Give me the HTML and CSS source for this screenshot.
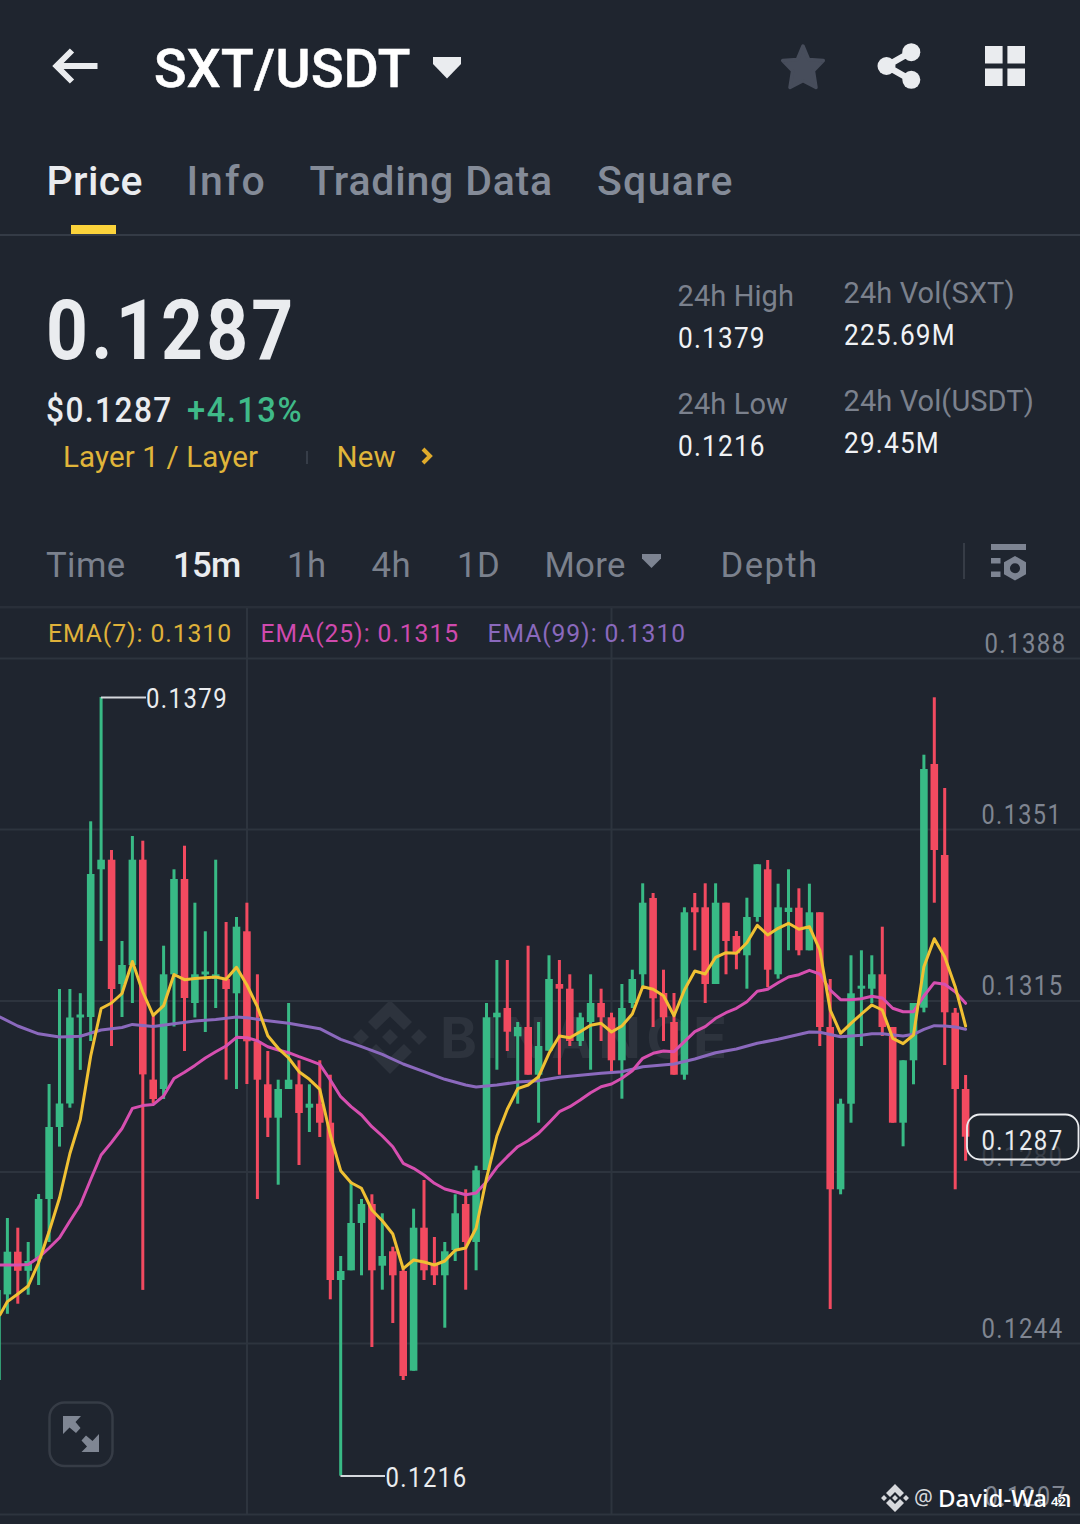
FILE: index.html
```html
<!DOCTYPE html>
<html>
    <head>
        <meta charset="utf-8">
        <title>SXT/USDT</title>
        <link rel="stylesheet" href="styles.css">
    </head>
    <body>

<!----- HEADER ----->
        <div class="header">
            <svg class="back" width="46" height="36" viewBox="0 0 46 36">
                <path d="M20 2.5L4.5 18L20 33.5M4 18H45.5" fill="none" stroke="#eaecef" stroke-width="6"/>
            </svg>
            <div class="pair">SXT/USDT</div>
            <svg class="caret" width="28" height="22" viewBox="0 0 28 22">
                <path d="M0 0H28V7L14 21.5L0 7Z" fill="#eaecef"/>
            </svg>
            <svg class="star" width="46" height="48" viewBox="0 0 46 48">
                <path d="M23 3L28.6 16.4L43.3 17.6L33.4 27.8L36 44.5L23 37.8L10 44.5L12.6 27.8L2.7 17.6L17.4 16.4Z" fill="#474d5b" stroke="#474d5b" stroke-width="3.5" stroke-linejoin="round"/>
            </svg>
            <svg class="share" width="44" height="46" viewBox="0 0 44 46">
                <path d="M34 9L9.5 23L34 37" fill="none" stroke="#eaecef" stroke-width="6.5"/>
                <circle cx="9.5" cy="23" r="9"/>
                <circle cx="34.3" cy="9.2" r="9"/>
                <circle cx="34.3" cy="36.8" r="9"/>
            </svg>
            <svg class="menu" width="40" height="40" viewBox="0 0 40 40">
                <path d="M0 0H17.6V17.6H0ZM22.4 0H40V17.6H22.4ZM0 22.4H17.6V40H0ZM22.4 22.4H40V40H22.4Z" fill="#eaecef"/>
            </svg>
        </div>

<!----- TABS ----->
        <div class="tabs">
            <div class="active">Price</div>
            <div class="info">Info</div>
            <div>Trading Data</div>
            <div class="square">Square</div>
        </div>

<!----- QUOTE ----->
        <div class="quote">
            <div class="last">
                <div class="price"><span>0.1287</span></div>
                <div class="change">
                    <div class="usd"><span>$0.1287</span></div>
                    <div class="pct"><span>+4.13%</span></div>
                </div>
                <div class="tags">
                    <div class="tag">Layer 1 / Layer</div>
                    <div class="sep"></div>
                    <div>New</div>
                    <svg width="12" height="18" viewBox="0 0 12 18">
                        <path d="M2 2L9 9L2 16" fill="none" stroke="#e0ab2b" stroke-width="4"/>
                    </svg>
                </div>
            </div>
            <div class="stats">
                <div class="label">24h High</div>
                <div class="value"><span>0.1379</span></div>
                <div class="label low">24h Low</div>
                <div class="value"><span>0.1216</span></div>
            </div>
            <div class="stats vol">
                <div class="label">24h Vol(SXT)</div>
                <div class="value"><span>225.69M</span></div>
                <div class="label low">24h Vol(USDT)</div>
                <div class="value"><span>29.45M</span></div>
            </div>
        </div>

<!----- INTERVALS ----->
        <div class="intervals">
            <div>Time</div>
            <div class="active">15m</div>
            <div>1h</div>
            <div>4h</div>
            <div>1D</div>
            <div class="more">More
                <svg width="19" height="14" viewBox="0 0 19 14"><path d="M0 0H19V4.5L9.5 14L0 4.5Z" fill="#7d8492"/></svg>
            </div>
            <div class="depth">Depth</div>
            <div class="bar"></div>
            <svg width="36" height="37" viewBox="0 0 36 37">
                <path d="M0 0H35V6H0ZM0 14H9.5V19.5H0ZM0 27.5H9.5V33H0Z" fill="#7d8492"/>
                <path d="M24 12L35 18.2V30.3L24 36.5L13 30.3V18.2ZM24 19.2A5 5 0 1 0 24 29.3A5 5 0 1 0 24 19.2Z" fill="#7d8492" fill-rule="evenodd"/>
            </svg>
        </div>

<!----- CHART ----->
        <svg id="chart" width="1080" height="918" viewBox="0 606 1080 918">
            <path class="grid top" d="M0 607H1080"/>
            <path class="grid" d="M0 658.5H1080M0 829.5H1080M0 1001H1080M0 1172H1080M0 1343.5H1080M0 1514.5H1080M247 608V1514M611.5 608V1514"/>

            <g class="mark">
                <path d="M390 1000L412 1022L404 1030L390 1016.5L376 1030L368 1022ZM390 1074L412 1052L404 1044L390 1057.5L376 1044L368 1052ZM390 1029L398 1037L390 1045L382 1037ZM361 1029L369 1037L361 1045L353 1037ZM419 1029L427 1037L419 1045L411 1037Z"/>
                <text x="440" y="1058" textLength="287">BINANCE</text>
            </g>

            <g class="axis">
                <text x="984.5" y="653" textLength="82" lengthAdjust="spacingAndGlyphs">0.1388</text>
                <text x="981.5" y="824" textLength="80.500" lengthAdjust="spacingAndGlyphs">0.1351</text>
                <text x="981.5" y="995" textLength="82" lengthAdjust="spacingAndGlyphs">0.1315</text>
                <text x="981.5" y="1166" textLength="82" lengthAdjust="spacingAndGlyphs">0.1280</text>
                <text x="981.5" y="1338" textLength="82" lengthAdjust="spacingAndGlyphs">0.1244</text>
                <text x="984.5" y="1506" textLength="82" lengthAdjust="spacingAndGlyphs">0.1207</text>
            </g>

            <rect class="tagFill" x="967" y="1114.5" width="111.5" height="45" rx="13"/>
            <g id="candles"></g>
            <g id="lines"></g>
            <rect class="tagLine" x="967" y="1114.5" width="111.5" height="45" rx="13"/>

            <g class="ema">
                <text class="yellow" x="48" y="642" textLength="184" lengthAdjust="spacingAndGlyphs">EMA(7): 0.1310</text>
                <text class="pink" x="260.5" y="642" textLength="198.500" lengthAdjust="spacingAndGlyphs">EMA(25): 0.1315</text>
                <text class="purple" x="487.5" y="642" textLength="198.500" lengthAdjust="spacingAndGlyphs">EMA(99): 0.1310</text>
            </g>

            <g class="peak">
                <path d="M101 697.5H146M340.5 1476H385"/>
                <text x="146" y="708" textLength="82" lengthAdjust="spacingAndGlyphs">0.1379</text>
                <text x="385.5" y="1487" textLength="82" lengthAdjust="spacingAndGlyphs">0.1216</text>
                <text x="981.5" y="1150" textLength="82" lengthAdjust="spacingAndGlyphs">0.1287</text>
            </g>

            <g class="expand">
                <rect x="49.5" y="1402.5" width="63" height="63.5" rx="15"/>
                <path d="M63 1416H81L75.5 1422L80.5 1428L76 1433L69.5 1427.5L63 1434ZM99 1452H81.5L87 1446.5L81.5 1440.5L86 1435.5L92.5 1441L99 1434Z"/>
            </g>

            <g class="user">
                <path d="M895 1484L904 1493L900 1497L895 1492L890 1497L886 1493ZM895 1512L904 1503L900 1499L895 1504L890 1499L886 1503ZM895 1495L898 1498L895 1501L892 1498ZM884 1495L887 1498L884 1501L881 1498ZM906 1495L909 1498L906 1501L903 1498Z"/>
                <text class="at" x="914" y="1505" textLength="20">@</text>
                <text x="938" y="1507" textLength="109">David-Wa</text>
                <text x="1056.5" y="1507">n</text>
                <text class="small" x="1051" y="1506">42</text>
            </g>
        </svg>

        <script src="chart.js"></script>
    </body>
</html>
```
FILE: styles.css
```css
body{
    margin: 0;
    width: 1080px;
    height: 1524px;
    overflow: hidden;
    background-color: #1f252f;
    color: #eaecef;
    font-family: Roboto, "Noto Sans", sans-serif;
}
svg{
    display: block;
    flex: none;
}

/*----- HEADER -----*/
.header{
    display: flex;
    align-items: center;
    height: 132px;
    padding: 0 55px 0 52px;
}
.pair{
    margin-left: 56px;
    padding-top: 6px;
    width: 256px;
    font-size: 53.5px;
    line-height: 64px;
    font-weight: 500;
    letter-spacing: 0.45px;
    -webkit-text-stroke: 0.6px #fff;
    color: #fff;
}
.caret{
    margin-left: 23px;
    margin-top: 3px;
}
.star{
    margin-left: auto;
    margin-top: 2px;
}
.share{
    margin-left: 51px;
    fill: #eaecef;
}
.menu{
    margin-left: 64px;
}

/*----- TABS -----*/
.tabs{
    display: grid;
    grid-template-columns: 139px 124px 287px auto;
    box-sizing: border-box;
    height: 104px;
    padding-left: 46.5px;
    border-bottom: 2px solid #343b46;
    font-size: 41px;
    line-height: 98px;
    font-weight: 500;
    letter-spacing: 0.8px;
    color: #848b98;
}
.tabs .active{
    position: relative;
    letter-spacing: 0.4px;
    color: #eaecef;
}
.tabs .active::after{
    content: "";
    position: absolute;
    left: 24.5px;
    top: 93px;
    width: 45px;
    height: 9px;
    background-color: #fbd33b;
}
.tabs .info{
    padding-left: 1px;
    letter-spacing: 2px;
}
.tabs .square{
    padding-left: 0.5px;
    letter-spacing: 1.3px;
}

/*----- QUOTE -----*/
.quote{
    display: flex;
    height: 288px;
}
.last{
    box-sizing: border-box;
    width: 677.5px;
    padding: 54.5px 0 0 46px;
}
/* narrow, spaced digits */
.price span, .usd span, .pct span, .value span{
    display: inline-block;
    letter-spacing: 0.045em;
    transform: scaleX(0.89);
    transform-origin: left;
}
.price{
    font-size: 84px;
    line-height: 80px;
    font-weight: 700;
}
.price span{
    transform: scaleX(0.87);
}
.change{
    display: grid;
    grid-template-columns: 141px auto;
    margin-top: 15.5px;
    font-size: 35.6px;
    line-height: 48px;
    font-weight: 500;
}
.pct{
    color: #3fba88;
}
.pct span{
    transform: scaleX(0.92);
}
.tags{
    display: flex;
    align-items: center;
    font-size: 29.5px;
    line-height: 46px;
    letter-spacing: 0.15px;
    color: #e0b53a;
}
.tag{
    margin-left: 17px;
    width: 243px;
}
.sep{
    width: 2px;
    height: 13px;
    margin-right: 28.5px;
    background-color: #363d48;
}
.tags svg{
    margin-left: 25px;
    margin-top: -2px;
}
.stats{
    width: 166px;
    padding-top: 39px;
    line-height: 42px;
    white-space: nowrap;
}
.vol{
    width: 230px;
    padding-top: 36px;
}
.label{
    font-size: 29px;
    letter-spacing: 0.1px;
    color: #7b818d;
}
.value{
    font-size: 29.5px;
    color: #f0f2f5;
}
.low{
    margin-top: 24px;
}

/*----- INTERVALS -----*/
.intervals{
    display: grid;
    grid-template-columns: 126px 115px 84.5px 85.5px 87.5px 176px 242px 28px 36px;
    align-items: center;
    height: 82px;
    padding-left: 46px;
    font-size: 34.7px;
    line-height: 82px;
    letter-spacing: 0.4px;
    color: #7b818d;
}
.intervals .active{
    padding-left: 1px;
    letter-spacing: -0.7px;
    font-weight: 500;
    color: #eaecef;
}
.more{
    display: flex;
    align-items: center;
    gap: 16px;
    letter-spacing: 0.3px;
}
.more svg{
    margin-top: -8px;
}
.depth{
    letter-spacing: 1.4px;
}
.bar{
    width: 2px;
    height: 36px;
    margin-top: -8px;
    background-color: #363c46;
}
.intervals > svg{
    margin-top: -5px;
}

/*----- CHART -----*/
#chart text{
    font-size: 27px;
    letter-spacing: 1.6px;
}
#chart .ema text{
    font-size: 26.5px;
    letter-spacing: 1px;
}
.grid{
    fill: none;
    stroke: #2d343e;
    stroke-width: 2;
}
.top{
    stroke: #292f39;
    stroke-width: 3;
}
.mark{
    fill: #2d333d;
}
#chart .mark text{
    font-family: Inter, sans-serif;
    font-size: 56px;
    font-weight: 700;
    letter-spacing: 0;
}
.axis{
    fill: #7f8591;
}
.tagFill{
    fill: #1f252f;
    fill-opacity: 0.75;
}
.tagLine{
    fill: none;
    stroke: #eaecef;
    stroke-width: 1.8;
}
.up{
    fill: #38ba85;
}
.down{
    fill: #f24a60;
}
#lines path{
    fill: none;
    stroke-width: 3;
    stroke-linejoin: round;
    stroke-linecap: round;
}
.yellow{
    fill: #dfb13a;
}
.pink{
    fill: #cf4aae;
}
.purple{
    fill: #8a69bd;
}
.peak{
    fill: #eaecef;
}
.peak path{
    stroke: #d5d8dd;
    stroke-width: 2;
}
.expand rect{
    fill: #1f252f;
    stroke: #363c46;
    stroke-width: 2.5;
}
.expand path{
    fill: #7f8693;
}
.user{
    fill: #fff;
}
#chart .user text{
    font-family: "Noto Sans", sans-serif;
    font-size: 24px;
    font-weight: 500;
    letter-spacing: 0;
}
.user path, .user .at{
    fill: #d6d8dc;
}
#chart .user .at{
    font-size: 21px;
    font-weight: 400;
}
#chart .user .small{
    font-size: 13px;
    font-weight: 600;
    stroke: #1f252f;
    stroke-width: 1.5;
    paint-order: stroke;
}
```
FILE: chart.js
```js
// first candle sits half off the left edge
var startX = 7.4;
var step = 10.415;

// [up, high, body top, body bottom, low]
var candles = [
    [1, 1290, 1290, 1380, 1380],
    [1, 1218, 1251.7, 1294.4, 1313.8], [0, 1227.7, 1251.7, 1270.8, 1303.7], [1, 1242, 1261, 1270.8, 1294.7],
    [1, 1194, 1199, 1258.6, 1285], [1, 1084, 1127, 1199, 1242], [1, 989, 1103.5, 1127, 1146.6],
    [1, 989, 1017.5, 1103.5, 1107.7], [1, 993.2, 1014.5, 1017.5, 1069.9], [1, 821.3, 874, 1017, 1041],
    [1, 697, 859.7, 869.3, 941], [0, 850, 859.7, 989, 1046], [1, 941, 965, 984, 1017],
    [1, 836, 859.7, 965, 1003], [0, 840.7, 859.7, 1074.4, 1289.9], [0, 1015, 1079.6, 1099, 1103],
    [1, 945.7, 974.3, 1089, 1099], [1, 869.3, 879, 974.3, 1026.5], [0, 845.7, 879, 998, 1051],
    [1, 902.7, 974.3, 1003, 1017.5], [1, 931.3, 971.5, 974.5, 1032], [1, 859.7, 974.3, 979, 1008],
    [0, 922, 979, 989, 1079.6], [1, 917, 926.7, 993.3, 1089], [0, 902.7, 931.3, 1041.3, 1084],
    [0, 974.3, 1041.3, 1079.7, 1199], [0, 1051, 1084.3, 1117.7, 1137], [1, 1079.7, 1089, 1117.7, 1184.7],
    [1, 1003, 1079.7, 1089, 1089], [0, 1060.3, 1084.3, 1113, 1165], [1, 1084.3, 1103.7, 1107.7, 1132],
    [0, 1060.3, 1103.7, 1122.7, 1137], [0, 1074.7, 1122.7, 1280, 1299.3], [1, 1256, 1271, 1280, 1475.7],
    [1, 1181.7, 1223, 1270.3, 1270.3], [1, 1199, 1204, 1223, 1275.3], [0, 1194.3, 1204, 1270.3, 1347],
    [1, 1213.3, 1256, 1265.7, 1289.7], [0, 1246.7, 1251.3, 1275.3, 1323], [0, 1266, 1271, 1376, 1380],
    [1, 1208.7, 1227.7, 1370.7, 1370.7], [0, 1180, 1227.7, 1270.3, 1280], [0, 1237, 1263, 1275.3, 1285],
    [1, 1242, 1251.3, 1275.3, 1327.7], [1, 1194.3, 1213.3, 1250, 1261], [0, 1189.3, 1204, 1242, 1289.7],
    [1, 1165.7, 1170.3, 1242, 1270.3], [1, 1003, 1017.3, 1170, 1170], [1, 960, 1012.7, 1017.3, 1069.7],
    [0, 960, 1008, 1031.7, 1051], [1, 1022, 1027, 1036.3, 1103.7], [0, 945.7, 1027, 1074.7, 1074.7],
    [1, 1022, 1046, 1074.7, 1122.7], [1, 955.3, 979, 1050.7, 1050.7], [0, 960, 984, 988.7, 1074.7],
    [0, 974.3, 988.7, 1041, 1046], [1, 1012.7, 1017.3, 1041, 1046], [1, 974.3, 1003, 1022, 1069.7],
    [0, 988.7, 1003, 1017.3, 1041], [0, 1012.7, 1017.3, 1060.3, 1072], [1, 984, 1008, 1060.3, 1098.7],
    [1, 969.7, 979, 1003, 1008], [1, 883.3, 902.7, 974.3, 988], [0, 893, 898, 998.3, 1027],
    [0, 969.7, 993, 1017.3, 1041], [0, 993, 1022, 1074.7, 1074.7], [1, 907.3, 912.3, 1074.7, 1079.7],
    [0, 893, 907.3, 912.3, 950.3], [0, 883.3, 907.3, 984, 1003], [1, 883.3, 902.7, 984, 984],
    [0, 902.7, 902.7, 941, 974.3], [0, 931, 936, 953.3, 969.3], [1, 897.7, 917, 955.3, 988.7],
    [1, 864.3, 864.3, 917, 921.7], [0, 860, 869.3, 969.7, 987.3], [1, 883.7, 907.3, 974.3, 978.7],
    [1, 869.3, 907.7, 912, 950.3], [0, 888.3, 907.7, 950.3, 955.3], [1, 883.7, 912.3, 950.3, 950.3],
    [0, 912.3, 912.3, 1027, 1046], [0, 979, 1027, 1189.3, 1309], [1, 1098.7, 1103.7, 1189.3, 1194.3],
    [1, 955.3, 993.3, 1103.7, 1122.7], [1, 950.3, 985.7, 988.7, 1046], [1, 955.3, 974.3, 988.7, 1003.3],
    [0, 926.7, 974.3, 1027, 1036], [0, 1027, 1027, 1122.7, 1122.7], [1, 1060.3, 1060.3, 1122.7, 1146.3],
    [1, 1003, 1003, 1060.3, 1084.3], [1, 754.7, 769, 1007.7, 1012.3], [0, 697.3, 764, 850, 902.7],
    [0, 788, 855, 1012.3, 1065], [0, 1008, 1012.7, 1089, 1189.3], [0, 1075, 1089, 1136.7, 1160.7]
];

// the first value of the two dense lines is drawn at x = 0
var ema7 = [1314.8, 1301.6, 1294, 1286, 1262.8, 1231.6, 1198, 1153.5, 1119.5, 1056, 1008.5, 1003, 993.5, 961.5, 992, 1015.4,
    1005.7, 974.5, 979.7, 978.6, 977.7, 977, 979.3, 967.3, 985, 1006.7, 1035.7, 1048.3, 1058, 1071.7, 1079.3, 1089.3,
    1135, 1170.7, 1182.7, 1188.3, 1210, 1220.7, 1234, 1268.7, 1260, 1262, 1265, 1261, 1250.3, 1248, 1228.3, 1178.3,
    1136, 1109.3, 1088.7, 1085, 1076.7, 1053.3, 1036, 1037.7, 1031.7, 1025.3, 1023.3, 1032, 1026, 1014, 986.7, 989.3,
    995.7, 1015.7, 990, 971, 974, 957.3, 952.7, 953.3, 942.7, 925.3, 935, 928.3, 923.3, 929.3, 926.7, 950, 1010,
    1033.3, 1023.3, 1014, 1005, 1010, 1038.3, 1043.7, 1035, 966.7, 938.7, 956.7, 986.7, 1026];

var ema25 = [1265, 1265, 1265, 1264.5, 1257.6, 1248, 1237.8, 1221, 1204.8, 1179.5, 1155, 1142.4, 1128.5, 1108.4, 1105.6, 1104.6,
    1096, 1078.5, 1072.3, 1065.4, 1058, 1051.8, 1046, 1037.3, 1037.7, 1040.7, 1046.7, 1050, 1052.7, 1056.7, 1060.3, 1064.3,
    1080, 1096.7, 1106.7, 1115, 1126.7, 1136, 1146.7, 1163.3, 1168.3, 1175, 1183.3, 1189, 1191.7, 1194.7, 1193, 1181.7,
    1167.3, 1156.7, 1146.7, 1140.7, 1133.3, 1122.7, 1111.7, 1106.7, 1100, 1092.7, 1086.7, 1084, 1078.3, 1070.7, 1058.3, 1053.3,
    1051, 1051.7, 1041.7, 1031.7, 1026.7, 1018.3, 1012.7, 1008.3, 1001.7, 991.3, 989.3, 982.7, 977, 974.7, 970.3, 974, 990,
    999.7, 999.7, 998.7, 996.3, 998, 1008.3, 1011.7, 1011.7, 996, 982.7, 984.3, 991.7, 1003.3];

// [candle index, y]
var ema99 = [[-0.71, 1017], [1, 1026], [3, 1033.8], [5, 1037], [7, 1036.2], [9, 1030], [11, 1027.5], [12, 1024.4], [13, 1025.5],
    [14, 1026.5], [16, 1023.7], [18, 1021], [20, 1019.6], [22, 1017], [23, 1017.7], [25, 1020.7], [27, 1023.3], [30, 1028.7],
    [32, 1039.3], [34, 1046.7], [36, 1054.3], [38, 1064], [40, 1071.7], [42, 1079.3], [44, 1085], [45, 1087], [47, 1085],
    [49, 1082], [51, 1080.7], [53, 1077.3], [57, 1073.3], [59, 1071.7], [61, 1066.7], [64, 1064], [66, 1059], [68, 1052.7],
    [70, 1049], [72, 1043.3], [74, 1039.3], [77, 1032], [78, 1032.3], [80, 1036.7], [82, 1035.3], [83, 1033.7], [84, 1033.7],
    [86, 1036], [87, 1034.3], [88, 1029.3], [89, 1025.7], [90, 1026], [91, 1027], [92, 1029.3]];

function rect(x, y, w, h){
    return '<rect x="' + x.toFixed(1) + '" y="' + y + '" width="' + w + '" height="' + h.toFixed(1) + '"/>';
}

function drawCandles(){
    var out = "";
    for (var i = 0; i < candles.length; i++){
        var c = candles[i];
        var x = startX + step * (i - 1);
        out += '<g class="' + (c[0] ? "up" : "down") + '">';
        out += rect(x - 1.5, c[1], 3, c[4] - c[1]);
        out += rect(x - 3.8, c[2], 7.6, c[3] - c[2]);
        out += '</g>';
    }
    document.getElementById('candles').innerHTML = out;
}

function linePath(points, color){
    var d = "";
    for (var i = 0; i < points.length; i++){
        d += (i ? "L" : "M") + (startX + step * points[i][0]).toFixed(1) + " " + points[i][1];
    }
    return '<path d="' + d + '" stroke="' + color + '"/>';
}

function dense(values){
    return values.map(function(y, i){
        return [i === 0 ? -0.71 : i - 1, y];
    });
}

drawCandles();
document.getElementById('lines').innerHTML =
    linePath(ema99, "#8b69bd") + linePath(dense(ema25), "#d64fb0") + linePath(dense(ema7), "#f0c033");
```
